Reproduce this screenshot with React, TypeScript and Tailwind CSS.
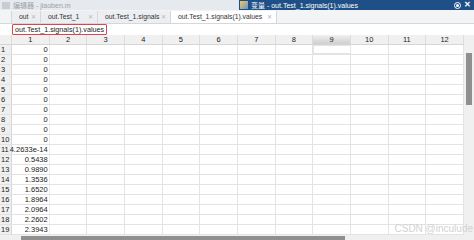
const values = ["0","0","0","0","0","0","0","0","0","0","4.2633e-14","0.5438","0.9890","1.3536","1.6520","1.8964","2.0964","2.2602","2.3943"];
const cols = [1,2,3,4,5,6,7,8,9,10,11,12];

function Tab({ label, width, active }: { label: string; width: string; active?: boolean }) {
  return (
    <div className={`flex items-center justify-between h-full pl-[7px] pr-[4px] border-r border-[#d4d7db] ${width} ${active ? "bg-white" : "bg-[#eceef1]"}`}>
      <span className="text-[#333]">{label}</span>
      <span className="text-[#b5b5b5] text-[6px]">✕</span>
    </div>
  );
}

export default function App() {
  return (
    <div className="w-[474px] h-[240px] overflow-hidden relative bg-white text-[8px] leading-none text-[#222]" style={{ fontFamily: '"Liberation Sans", "Noto Sans CJK SC", sans-serif' }}>
      {/* title bar */}
      <div className="flex h-[10px] text-[7px]">
        <div className="w-[239px] bg-[#e6eaef] flex items-center gap-[3px] pl-[2px] text-[#9aa0a6]">
          <span className="w-[8px] h-[7px] bg-[#c9cdd3] inline-block"></span>
          <span>编辑器 - jiaoben.m</span>
        </div>
        <div className="flex-1 bg-[#1e4f86] flex items-center text-white pl-[1px]">
          <span className="w-[8px] h-[8px] bg-gradient-to-br from-[#f2c94c] to-[#6b8fc4] inline-block mr-[3px]"></span>
          <span>变量 - out.Test_1.signals(1).values</span>
          <div className="ml-auto flex items-center gap-[3px] pr-[3px]">
            <span className="w-[7px] h-[7px] rounded-full border border-white flex items-center justify-center">
              <span className="w-[3px] h-[3px] rounded-full bg-white"></span>
            </span>
            <span className="text-[8px] font-bold">✕</span>
          </div>
        </div>
      </div>
      {/* tabs */}
      <div className="h-[14px] bg-[#f3f4f6] border-b border-[#d4d7db] flex pl-[11px] pt-[1px] text-[6.8px]">
        <div className="flex h-full border-l border-[#d4d7db]">
          <Tab label="out" width="w-[29px]" />
          <Tab label="out.Test_1" width="w-[57px]" />
          <Tab label="out.Test_1.signals" width="w-[73px]" />
          <Tab label="out.Test_1.signals(1).values" width="w-[106px]" active />
        </div>
      </div>
      {/* name */}
      <div className="h-[11px] flex items-center pl-[12px] text-[7.2px]">
        <div className="border border-[#e0434b] rounded-[1px] px-[2px] h-[11px] flex items-center text-[#222]">out.Test_1.signals(1).values</div>
      </div>
      {/* grid */}
      <div className="flex">
        <div className="w-[464px]">
          <div className="grid grid-cols-[12px_repeat(12,37.67px)] h-[10px] bg-[#f0f0f0] border-b border-[#d6d6d6] text-[7.5px]">
            <div className="border-r border-[#dcdcdc]"></div>
            {cols.map((c) => (
              <div key={c} className={`flex items-center justify-center border-r border-[#dcdcdc] ${c === 9 ? "bg-gradient-to-b from-[#f0f0f0] to-[#cfcfcf]" : ""}`}>{c}</div>
            ))}
          </div>
          {values.map((v, i) => (
            <div key={i} className="grid grid-cols-[12px_repeat(12,37.67px)] h-[10px] border-b border-[#e3e3e3] text-[7.5px]">
              <div className="bg-[#f0f0f0] border-r border-[#d6d6d6] flex items-center pl-[1px] overflow-hidden">{i + 1}</div>
              <div className="flex items-center justify-end pr-[1px] border-r border-[#ececec] whitespace-nowrap">{v}</div>
              {cols.slice(1).map((c) => (
                <div key={c} className={`border-r border-[#e3e3e3] ${i === 0 && c === 9 ? "border border-[#7a7a7a]" : ""}`}></div>
              ))}
            </div>
          ))}
        </div>
        <div className="w-[10px] bg-[#f0f0f0] pt-[18px] flex justify-center">
          <div className="w-[6px] h-[52px] bg-[#8f8f8f]"></div>
        </div>
      </div>
      {/* horizontal scrollbar */}
      <div className="h-[6px] bg-[#f0f0f0] flex items-center pl-[21px]">
        <div className="w-[324px] h-[5px] bg-[#8f8f8f]"></div>
      </div>
      <div className="absolute right-[1px] bottom-[6px] text-[#d2d2d2] text-[10px]">CSDN @inculude</div>
    </div>
  );
}
